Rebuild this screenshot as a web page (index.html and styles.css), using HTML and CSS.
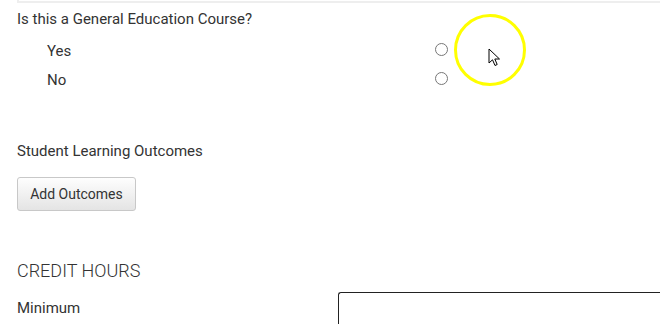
FILE: index.html
```html
<!DOCTYPE html>
<html>
<head>
<meta charset="utf-8">
<link rel="stylesheet" href="styles.css">
</head>
<body>
<div class="page">
  <div class="topbox"></div>
  <div class="question">Is this a General Education Course?</div>
  <div class="options">
    <label class="opt"><span class="opt-label">Yes</span><span class="radio"></span></label>
    <label class="opt"><span class="opt-label">No</span><span class="radio"></span></label>
  </div>
  <div class="slo">Student Learning Outcomes</div>
  <button class="btn">Add Outcomes</button>
  <h3 class="section">CREDIT HOURS</h3>
  <div class="field">
    <span class="field-label">Minimum</span>
    <span class="input"></span>
  </div>
</div>
<div class="cursor-ring"></div>
<svg class="cursor" width="14" height="20" viewBox="0 0 14 20">
  <path d="M1 1 L1 15 L4.5 11.8 L7 17.5 L9.2 16.5 L6.8 11 L11.5 11 Z" fill="#fff" stroke="#000" stroke-width="1" stroke-linejoin="round"/>
</svg>
</body>
</html>
```
FILE: styles.css
```css
html, body { margin: 0; padding: 0; background: #fff; }
body {
  font-family: Roboto, "Liberation Sans", sans-serif;
  font-size: 15px;
  color: #333;
  width: 660px;
  height: 324px;
  overflow: hidden;
  position: relative;
}
.page { padding-left: 17px; }
.topbox {
  height: 1px;
  border-left: 2px solid #eeeeee;
  border-bottom: 2px solid #eeeeee;
}
.question { margin-top: 6px; line-height: 20px; }
.options { padding-left: 30px; margin-top: 7px; }
.opt { display: flex; align-items: center; height: 29px; }
.opt-label { width: 388px; }
.radio {
  border: 1px solid #777;
  border-radius: 50%;
  box-sizing: border-box;
  width: 13px; height: 13px;
  margin-top: -2px;
}
.slo { margin-top: 47px; line-height: 20px; }
.btn {
  display: block;
  margin-top: 16px;
  width: 119px;
  height: 34px;
  font-family: Roboto, "Liberation Sans", sans-serif;
  font-size: 14px;
  color: #333;
  background: linear-gradient(#fefefe, #e4e4e4);
  border: 1px solid #c8c8c8;
  border-radius: 3px;
  padding: 0;
}
.section {
  margin: 48px 0 0 0;
  font-size: 18px;
  font-weight: 300;
  line-height: 24px;
  color: #333;
}
.field { display: flex; align-items: flex-start; margin-top: 9px; }
.field-label { width: 321px; padding-top: 6px; line-height: 20px; }
.input {
  flex: 1;
  height: 40px;
  border: 1px solid #222;
  border-right: none;
  border-radius: 3px 0 0 0;
}
.cursor-ring {
  position: absolute;
  left: 454px; top: 14px;
  width: 66px; height: 66px;
  border: 3px solid #ffff00;
  border-radius: 50%;
}
.cursor { position: absolute; left: 488px; top: 48px; }
```
